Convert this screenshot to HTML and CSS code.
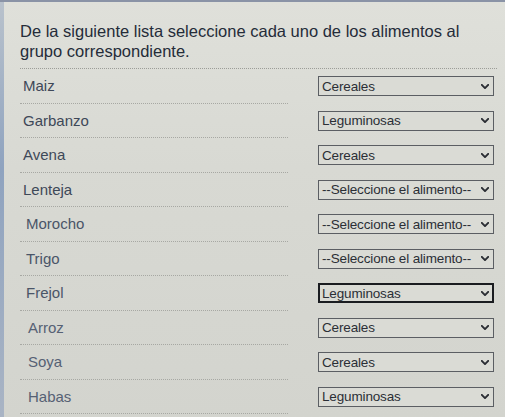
FILE: index.html
```html
<!DOCTYPE html>
<html lang="es">
<head>
<meta charset="utf-8">
<title>Alimentos</title>
<link rel="stylesheet" href="styles.css">
</head>
<body>
<div class="page">
  <div class="edge"></div>
  <div class="content">
    <p class="question">De la siguiente lista seleccione cada uno de los alimentos al grupo correspondiente.</p>
    <div class="list">
      <div class="row"><span class="label">Maiz</span><div class="select"><span>Cereales</span><svg class="chev" viewBox="0 0 10 6"><path d="M1 1l4 4 4-4"/></svg></div></div>
      <div class="row"><span class="label">Garbanzo</span><div class="select"><span>Leguminosas</span><svg class="chev" viewBox="0 0 10 6"><path d="M1 1l4 4 4-4"/></svg></div></div>
      <div class="row"><span class="label">Avena</span><div class="select"><span>Cereales</span><svg class="chev" viewBox="0 0 10 6"><path d="M1 1l4 4 4-4"/></svg></div></div>
      <div class="row"><span class="label">Lenteja</span><div class="select"><span>--Seleccione el alimento--</span><svg class="chev" viewBox="0 0 10 6"><path d="M1 1l4 4 4-4"/></svg></div></div>
      <div class="row"><span class="label">Morocho</span><div class="select"><span>--Seleccione el alimento--</span><svg class="chev" viewBox="0 0 10 6"><path d="M1 1l4 4 4-4"/></svg></div></div>
      <div class="row"><span class="label">Trigo</span><div class="select"><span>--Seleccione el alimento--</span><svg class="chev" viewBox="0 0 10 6"><path d="M1 1l4 4 4-4"/></svg></div></div>
      <div class="row"><span class="label">Frejol</span><div class="select focused"><span>Leguminosas</span><svg class="chev" viewBox="0 0 10 6"><path d="M1 1l4 4 4-4"/></svg></div></div>
      <div class="row"><span class="label">Arroz</span><div class="select"><span>Cereales</span><svg class="chev" viewBox="0 0 10 6"><path d="M1 1l4 4 4-4"/></svg></div></div>
      <div class="row"><span class="label">Soya</span><div class="select"><span>Cereales</span><svg class="chev" viewBox="0 0 10 6"><path d="M1 1l4 4 4-4"/></svg></div></div>
      <div class="row"><span class="label">Habas</span><div class="select"><span>Leguminosas</span><svg class="chev" viewBox="0 0 10 6"><path d="M1 1l4 4 4-4"/></svg></div></div>
    </div>
  </div>
</div>
</body>
</html>
```

FILE: styles.css
```css
* { box-sizing: border-box; }
html, body {
  margin: 0;
  padding: 0;
  background: #d8d9d3;
  font-family: "Liberation Sans", Arial, sans-serif;
  overflow: hidden;
}
.page {
  display: flex;
  width: 505px;
  height: 417px;
  border-top: 2px solid #8a93a6;
  background: linear-gradient(180deg, #dfe0da 0%, #d8d9d3 40%, #d3d4ce 100%);
}
.edge {
  width: 4px;
  flex: none;
  background: linear-gradient(180deg, #b9c2cc 0%, #8fa3bf 40%, #a9b4c4 100%);
}
.content {
  flex: 1;
  padding: 0 8px 0 16px;
}
.question {
  margin: 19px 0 0;
  padding-bottom: 7px;
  font-size: 16.5px;
  line-height: 20px;
  color: #252c39;
  border-bottom: 1px dotted #9c9d98;
}
.list {
  display: flex;
  flex-direction: column;
}
.row {
  display: flex;
  align-items: center;
  height: 34.5px;
}
.label {
  width: 268px;
  align-self: stretch;
  display: flex;
  align-items: center;
  padding-left: 3px;
  padding-top: 1px;
  font-size: 15px;
  color: #3e4858;
  border-bottom: 1px dotted #a7a8a3;
  margin-top: -1px;
}
.row:nth-child(n+5) .label { padding-left: 6px; color: #4a5568; }
.row:nth-child(n+8) .label { padding-left: 8px; color: #566174; }
.select {
  margin-left: 30px;
  width: 176px;
  height: 20px;
  border: 1px solid #5b5e63;
  background: #dadbd5;
  display: flex;
  align-items: center;
  justify-content: space-between;
  padding: 0 4px 0 3px;
  font-size: 13.5px;
  letter-spacing: -0.15px;
  color: #2b2f36;
}
.select span { white-space: nowrap; }
.select.focused {
  border: 2px solid #1a1c20;
  padding: 0 3px 0 2px;
}
.chev {
  width: 8px;
  height: 5px;
  flex: none;
}
.chev path {
  fill: none;
  stroke: #2a2d33;
  stroke-width: 2.4;
  stroke-linecap: round;
  stroke-linejoin: round;
}
```
